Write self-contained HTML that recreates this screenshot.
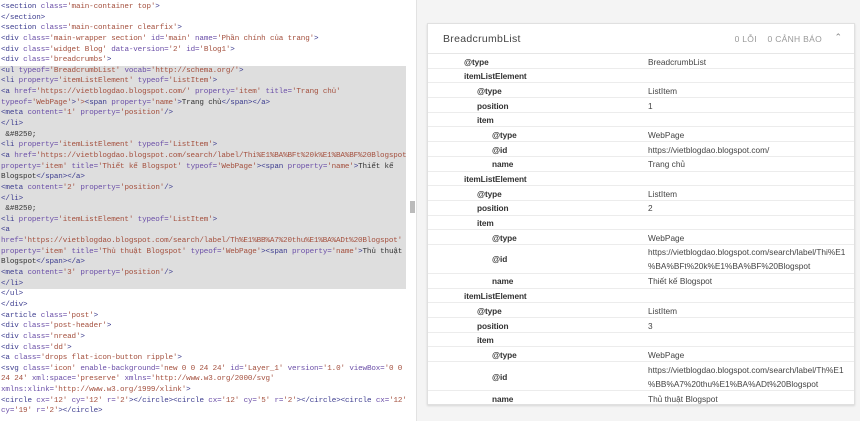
<!DOCTYPE html>
<html><head><meta charset="utf-8"><style>
*{margin:0;padding:0;box-sizing:border-box}
html,body{width:860px;height:421px;overflow:hidden}
body{background:#fff;position:relative;font-family:"Liberation Sans",sans-serif}
#code{position:absolute;left:0;top:2px;width:406px;font-family:"Liberation Mono",monospace;font-size:7.6px;line-height:10.65px;color:#333;letter-spacing:-0.15px}
#code div{padding-left:1px;height:10.65px;white-space:pre;overflow:hidden}
.hl{background:#dedede}
.t{color:#3d3d8f}.a{color:#6b4fa8}.v{color:#a4503e}
#split{position:absolute;left:406px;top:0;width:10px;height:421px;background:#fff}
#grip{position:absolute;left:410px;top:201px;width:5px;height:12px;background:#bbb}
#right{position:absolute;left:416px;top:0;width:444px;height:421px;background:#f4f4f4;border-left:1px solid #e2e2e2}
#card{position:absolute;left:427px;top:23px;width:428px;height:382px;background:#fff;border:1px solid #e0e0e0;box-shadow:0 1px 2px rgba(0,0,0,.12)}
#hdr{height:30px;border-bottom:1px solid #e6e6e6;position:relative}
#hdr .ti{position:absolute;left:15px;top:9px;font-size:10.5px;color:#444;letter-spacing:.3px}
#hdr .st{position:absolute;right:32px;top:10px;font-size:8.5px;color:#999;letter-spacing:.3px}
#hdr .ch{position:absolute;right:12px;top:8px;font-size:9px;color:#888}
.r{position:relative;height:14.7px;border-bottom:1px solid #ececec;font-size:8.3px;color:#333}
.r.d{height:29px}
.r .k{position:absolute;top:2.5px;font-weight:bold;color:#333;letter-spacing:-.1px}
.r.d .k{top:9.5px}
.r .val{position:absolute;left:220px;color:#444;line-height:14px;top:0.5px}
.l1{left:36px}.l2{left:49px}.l3{left:64px}
</style></head><body>
<div id="code"><div><span class="t">&lt;section</span> <span class="a">class=</span><span class="v">'main-container top'</span><span class="t">&gt;</span></div><div><span class="t">&lt;/section&gt;</span></div><div><span class="t">&lt;section</span> <span class="a">class=</span><span class="v">'main-container clearfix'</span><span class="t">&gt;</span></div><div><span class="t">&lt;div</span> <span class="a">class=</span><span class="v">'main-wrapper section'</span> <span class="a">id=</span><span class="v">'main'</span> <span class="a">name=</span><span class="v">'Phần chính của trang'</span><span class="t">&gt;</span></div><div><span class="t">&lt;div</span> <span class="a">class=</span><span class="v">'widget Blog'</span> <span class="a">data-version=</span><span class="v">'2'</span> <span class="a">id=</span><span class="v">'Blog1'</span><span class="t">&gt;</span></div><div><span class="t">&lt;div</span> <span class="a">class=</span><span class="v">'breadcrumbs'</span><span class="t">&gt;</span></div><div class="hl"><span class="t">&lt;ul</span> <span class="a">typeof=</span><span class="v">'BreadcrumbList'</span> <span class="a">vocab=</span><span class="v">'http://schema.org/'</span><span class="t">&gt;</span></div><div class="hl"><span class="t">&lt;li</span> <span class="a">property=</span><span class="v">'itemListElement'</span> <span class="a">typeof=</span><span class="v">'ListItem'</span><span class="t">&gt;</span></div><div class="hl"><span class="t">&lt;a</span> <span class="a">href=</span><span class="v">'https://vietblogdao.blogspot.com/'</span> <span class="a">property=</span><span class="v">'item'</span> <span class="a">title=</span><span class="v">'Trang chủ'</span></div><div class="hl"><span class="a">typeof=</span><span class="v">'WebPage'</span><span class="t">&gt;</span><span class="v">'&gt;</span><span class="t">&lt;span</span> <span class="a">property=</span><span class="v">'name'</span><span class="t">&gt;</span>Trang chủ<span class="t">&lt;/span&gt;&lt;/a&gt;</span></div><div class="hl"><span class="t">&lt;meta</span> <span class="a">content=</span><span class="v">'1'</span> <span class="a">property=</span><span class="v">'position'</span><span class="t">/&gt;</span></div><div class="hl"><span class="t">&lt;/li&gt;</span></div><div class="hl"> &amp;#8250;</div><div class="hl"><span class="t">&lt;li</span> <span class="a">property=</span><span class="v">'itemListElement'</span> <span class="a">typeof=</span><span class="v">'ListItem'</span><span class="t">&gt;</span></div><div class="hl"><span class="t">&lt;a</span> <span class="a">href=</span><span class="v">'https://vietblogdao.blogspot.com/search/label/Thi%E1%BA%BFt%20k%E1%BA%BF%20Blogspot'</span></div><div class="hl"><span class="a">property=</span><span class="v">'item'</span> <span class="a">title=</span><span class="v">'Thiết kế Blogspot'</span> <span class="a">typeof=</span><span class="v">'WebPage'</span><span class="t">&gt;&lt;span</span> <span class="a">property=</span><span class="v">'name'</span><span class="t">&gt;</span>Thiết kế</div><div class="hl">Blogspot<span class="t">&lt;/span&gt;&lt;/a&gt;</span></div><div class="hl"><span class="t">&lt;meta</span> <span class="a">content=</span><span class="v">'2'</span> <span class="a">property=</span><span class="v">'position'</span><span class="t">/&gt;</span></div><div class="hl"><span class="t">&lt;/li&gt;</span></div><div class="hl"> &amp;#8250;</div><div class="hl"><span class="t">&lt;li</span> <span class="a">property=</span><span class="v">'itemListElement'</span> <span class="a">typeof=</span><span class="v">'ListItem'</span><span class="t">&gt;</span></div><div class="hl"><span class="t">&lt;a</span></div><div class="hl"><span class="a">href=</span><span class="v">'https://vietblogdao.blogspot.com/search/label/Th%E1%BB%A7%20thu%E1%BA%ADt%20Blogspot'</span></div><div class="hl"><span class="a">property=</span><span class="v">'item'</span> <span class="a">title=</span><span class="v">'Thủ thuật Blogspot'</span> <span class="a">typeof=</span><span class="v">'WebPage'</span><span class="t">&gt;&lt;span</span> <span class="a">property=</span><span class="v">'name'</span><span class="t">&gt;</span>Thủ thuật</div><div class="hl">Blogspot<span class="t">&lt;/span&gt;&lt;/a&gt;</span></div><div class="hl"><span class="t">&lt;meta</span> <span class="a">content=</span><span class="v">'3'</span> <span class="a">property=</span><span class="v">'position'</span><span class="t">/&gt;</span></div><div class="hl"><span class="t">&lt;/li&gt;</span></div><div><span class="t">&lt;/ul&gt;</span></div><div><span class="t">&lt;/div&gt;</span></div><div><span class="t">&lt;article</span> <span class="a">class=</span><span class="v">'post'</span><span class="t">&gt;</span></div><div><span class="t">&lt;div</span> <span class="a">class=</span><span class="v">'post-header'</span><span class="t">&gt;</span></div><div><span class="t">&lt;div</span> <span class="a">class=</span><span class="v">'nread'</span><span class="t">&gt;</span></div><div><span class="t">&lt;div</span> <span class="a">class=</span><span class="v">'dd'</span><span class="t">&gt;</span></div><div><span class="t">&lt;a</span> <span class="a">class=</span><span class="v">'drops flat-icon-button ripple'</span><span class="t">&gt;</span></div><div><span class="t">&lt;svg</span> <span class="a">class=</span><span class="v">'icon'</span> <span class="a">enable-background=</span><span class="v">'new 0 0 24 24'</span> <span class="a">id=</span><span class="v">'Layer_1'</span> <span class="a">version=</span><span class="v">'1.0'</span> <span class="a">viewBox=</span><span class="v">'0 0</span></div><div><span class="v">24 24'</span> <span class="a">xml:space=</span><span class="v">'preserve'</span> <span class="a">xmlns=</span><span class="v">'http://www.w3.org/2000/svg'</span></div><div><span class="a">xmlns:xlink=</span><span class="v">'http://www.w3.org/1999/xlink'</span><span class="t">&gt;</span></div><div><span class="t">&lt;circle</span> <span class="a">cx=</span><span class="v">'12'</span> <span class="a">cy=</span><span class="v">'12'</span> <span class="a">r=</span><span class="v">'2'</span><span class="t">&gt;&lt;/circle&gt;&lt;circle</span> <span class="a">cx=</span><span class="v">'12'</span> <span class="a">cy=</span><span class="v">'5'</span> <span class="a">r=</span><span class="v">'2'</span><span class="t">&gt;&lt;/circle&gt;&lt;circle</span> <span class="a">cx=</span><span class="v">'12'</span></div><div><span class="a">cy=</span><span class="v">'19'</span> <span class="a">r=</span><span class="v">'2'</span><span class="t">&gt;&lt;/circle&gt;</span></div></div>
<div id="split"></div><div id="grip"></div>
<div id="right"></div>
<div id="card">
<div id="hdr"><span class="ti">BreadcrumbList</span><span class="st">0 LỖI &nbsp;&nbsp; 0 CẢNH BÁO</span><span class="ch">&#8963;</span></div>
<div class="r"><span class="k l1">@type</span><span class="val">BreadcrumbList</span></div>
<div class="r"><span class="k l1">itemListElement</span></div>
<div class="r"><span class="k l2">@type</span><span class="val">ListItem</span></div>
<div class="r"><span class="k l2">position</span><span class="val">1</span></div>
<div class="r"><span class="k l2">item</span></div>
<div class="r"><span class="k l3">@type</span><span class="val">WebPage</span></div>
<div class="r"><span class="k l3">@id</span><span class="val">https://vietblogdao.blogspot.com/</span></div>
<div class="r"><span class="k l3">name</span><span class="val">Trang chủ</span></div>
<div class="r"><span class="k l1">itemListElement</span></div>
<div class="r"><span class="k l2">@type</span><span class="val">ListItem</span></div>
<div class="r"><span class="k l2">position</span><span class="val">2</span></div>
<div class="r"><span class="k l2">item</span></div>
<div class="r"><span class="k l3">@type</span><span class="val">WebPage</span></div>
<div class="r d"><span class="k l3">@id</span><span class="val">https://vietblogdao.blogspot.com/search/label/Thi%E1<br>%BA%BFt%20k%E1%BA%BF%20Blogspot</span></div>
<div class="r"><span class="k l3">name</span><span class="val">Thiết kế Blogspot</span></div>
<div class="r"><span class="k l1">itemListElement</span></div>
<div class="r"><span class="k l2">@type</span><span class="val">ListItem</span></div>
<div class="r"><span class="k l2">position</span><span class="val">3</span></div>
<div class="r"><span class="k l2">item</span></div>
<div class="r"><span class="k l3">@type</span><span class="val">WebPage</span></div>
<div class="r d"><span class="k l3">@id</span><span class="val">https://vietblogdao.blogspot.com/search/label/Th%E1<br>%BB%A7%20thu%E1%BA%ADt%20Blogspot</span></div>
<div class="r" style="border-bottom:none"><span class="k l3">name</span><span class="val">Thủ thuật Blogspot</span></div>
</div>
</body></html>
